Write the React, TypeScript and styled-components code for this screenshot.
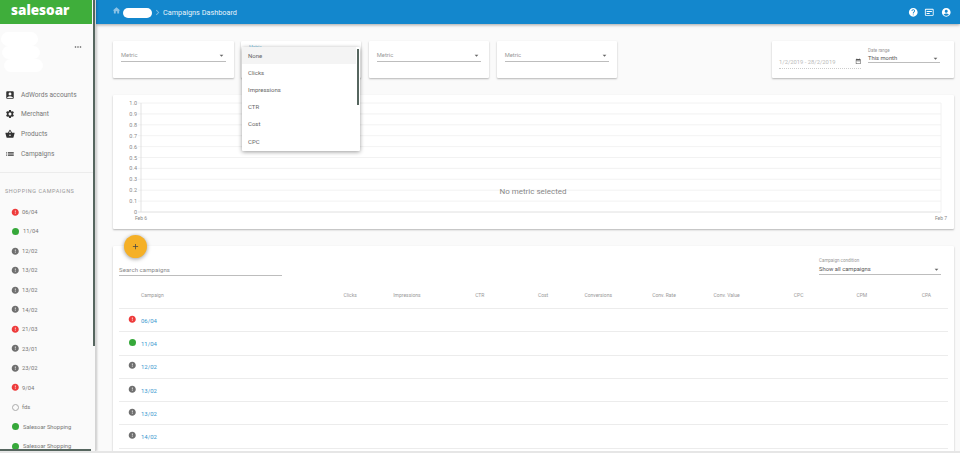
import React from 'react';
import styled, { createGlobalStyle } from 'styled-components';
import {
  MdAccountBox, MdAccountCircle, MdAdd, MdArrowDropDown, MdChevronRight, MdDateRange, MdError,
  MdHelp, MdHome, MdList, MdMoreHoriz, MdSettings, MdShoppingBasket
} from 'react-icons/md';

const Global = createGlobalStyle`
  html, body { margin: 0; padding: 0; height: 100%; overflow: hidden; background: #fafafa; }
  body { font-family: Roboto, "Liberation Sans", sans-serif; color: #777; }
  * { box-sizing: border-box; }
`;

const Shell = styled.div`
  display: flex;
  width: 960px;
  height: 453px;
  overflow: hidden;
  position: relative;
`;

/* sidebar */
const Sidebar = styled.aside`
  width: 96px;
  flex: none;
  height: 451px;
  background: #fafafa;
  border-right: 1px solid #d4d4d4;
  box-shadow: 1px 0 2px rgba(0, 0, 0, 0.2);
  position: relative;
  overflow: hidden;
  z-index: 2;
`;
const SideScroll = styled.div`
  position: absolute;
  top: 0;
  right: 0;
  width: 2.5px;
  height: 346px;
  background: #56665f;
`;
const HorizScroll = styled.div`
  position: absolute;
  left: 0;
  bottom: 0;
  width: 91px;
  height: 2px;
  background: #56665f;
`;
const Logo = styled.div`
  height: 24px;
  background: #3fae3b;
  margin-right: 3px;
  color: #fff;
  font-size: 13.5px;
  font-weight: 800;
  line-height: 20px;
  padding-left: 11px;
  font-family: "Open Sans", Roboto, sans-serif;
`;
const Account = styled.div`
  height: 49px;
  padding: 8px 0 0 1px;
  display: flex;
  position: relative;
`;
const Blobs = styled.div`
  width: 42px;
  display: flex;
  flex-direction: column;
`;
const Blob = styled.div<{ $w: number; $h: number; $ml?: number }>`
  width: ${p => p.$w}px;
  height: ${p => p.$h}px;
  margin-left: ${p => p.$ml || 0}px;
  border-radius: 8px;
  background: #fff;
`;
const Dots = styled.div`
  margin: 10px 0 0 30px;
  color: #555;
  font-size: 10px;
  line-height: 0;
  height: 10px;
`;
const Nav = styled.nav`
  padding-top: 12px;
  height: 100px;
  border-bottom: 1px solid #ececec;
`;
const NavItem = styled.div`
  display: flex;
  align-items: center;
  height: 19.6px;
  padding-left: 5px;
  gap: 6px;
  font-size: 6.6px;
  color: #777;
  svg { font-size: 10px; color: #333; flex: none; }
`;
const SectionTitle = styled.div`
  font-size: 5.5px;
  letter-spacing: 0.55px;
  color: #999;
  padding: 15px 0 0 5px;
  height: 29px;
`;
const CampItem = styled.div`
  display: flex;
  align-items: center;
  height: 19.55px;
  padding-left: 12px;
  gap: 3px;
  font-size: 5.8px;
  color: #777;
  white-space: nowrap;
`;
const statusColor = { red: '#ee3b3b', grey: '#6f6f6f' };
const StatusIcon = styled.span<{ $kind: string }>`
  display: inline-flex;
  align-items: center;
  justify-content: center;
  flex: none;
  width: 7px;
  height: 7px;
  margin-right: ${p => (p.$kind === 'green' ? 1 : 0)}px;
  border-radius: 50%;
  background: ${p => (p.$kind === 'green' ? '#36a83a' : 'transparent')};
  border: ${p => (p.$kind === 'empty' ? '1px solid #aaa' : 'none')};
  color: ${p => statusColor[p.$kind] || '#fff'};
  svg { font-size: 8.5px; flex: none; }
`;

/* main */
const Main = styled.main`
  flex: 1;
  min-width: 0;
  height: 453px;
  display: flex;
  flex-direction: column;
  overflow: hidden;
  position: relative;
`;
const TopBar = styled.header`
  height: 24px;
  flex: none;
  background: #1387cd;
  box-shadow: 0 1px 3px rgba(0, 0, 0, 0.35);
  color: #e8f3fa;
  display: flex;
  align-items: center;
  padding: 0 9px 0 16px;
  font-size: 7.3px;
  position: relative;
  z-index: 1;
`;
const HomeIcon = styled(MdHome)`
  font-size: 9px;
  color: #8cc3e6;
  margin-top: -3px;
`;
const Pill = styled.div`
  width: 29px;
  height: 10px;
  border-radius: 5px;
  background: #fff;
  margin-left: 2px;
  margin-top: 2px;
`;
const Crumb = styled(MdChevronRight)`
  font-size: 11px;
  color: #7db9e0;
`;
const TopIcons = styled.div`
  margin-left: auto;
  display: flex;
  gap: 6px;
  svg { width: 10.5px; height: 10.5px; color: #fff; fill: currentColor; }
`;
const Content = styled.div`
  flex: 1;
  padding: 17px 6px 0 17px;
  display: flex;
  flex-direction: column;
  position: relative;
`;
const FilterRow = styled.div`
  display: flex;
  gap: 7.4px;
  height: 37px;
`;
const Card = styled.div`
  background: #fff;
  box-shadow: 0 1px 2px rgba(0, 0, 0, 0.28);
  border-radius: 1px;
`;
const MetricCard = styled(Card)`
  width: 120.5px;
  padding: 8px 8px 0;
`;
const SelectLine = styled.div<{ $dark?: boolean; $size?: number }>`
  display: flex;
  align-items: center;
  justify-content: space-between;
  height: ${p => p.$size || 13}px;
  border-bottom: 1px solid #bdbdbd;
  font-size: 5.8px;
  color: ${p => (p.$dark ? '#555' : '#999')};
  svg { font-size: 9px; color: #666; flex: none; }
`;
const FocusLabel = styled.div`
  font-size: 4.5px;
  line-height: 5px;
  margin-top: -4px;
  color: #7fc4e0;
`;
const DateCard = styled(Card)`
  width: 182px;
  margin-left: auto;
  padding: 7px 14px 0 7px;
  display: flex;
  gap: 7px;
`;
const DateField = styled.div`
  width: 82px;
  margin-top: 7px;
  height: 14px;
  border-bottom: 1px dotted #ccc;
  display: flex;
  align-items: center;
  justify-content: space-between;
  font-size: 5.8px;
  color: #bbb;
  svg { font-size: 6.5px; color: #555; }
`;
const RangeField = styled.div`
  flex: 1;
`;
const TinyLabel = styled.div`
  font-size: 4.5px;
  line-height: 6px;
  color: #999;
`;
const ChartCard = styled(Card)`
  margin-top: 17px;
  height: 134px;
  flex: none;
`;
const ChartSvg = styled.svg`
  display: block;
  text { font-family: Roboto, "Liberation Sans", sans-serif; fill: #888; }
`;
const TableCard = styled(Card)`
  margin-top: 17px;
  flex: 1;
  padding: 12px 6px 0;
  position: relative;
`;
const Fab = styled.button`
  position: absolute;
  left: 10.5px;
  top: -11.5px;
  width: 23px;
  height: 23px;
  border: none;
  padding: 0;
  border-radius: 50%;
  background: #f5b026;
  box-shadow: 0 1px 4px rgba(0, 0, 0, 0.4);
  display: flex;
  align-items: center;
  justify-content: center;
  color: #444;
  font-size: 9px;
`;
const TableTools = styled.div`
  display: flex;
  justify-content: space-between;
  height: 18px;
`;
const Search = styled.div`
  width: 163px;
  height: 18px;
  padding-top: 8px;
  border-bottom: 1px solid #bdbdbd;
  font-size: 6px;
  letter-spacing: 0.1px;
  color: #888;
`;
const Condition = styled.div`
  width: 122px;
  margin-right: 7px;
`;
const TableRow = styled.div<{ $head?: boolean }>`
  display: grid;
  grid-template-columns: 22px 1fr repeat(10, 63.8px);
  padding-right: 17px;
  align-items: center;
  height: ${p => (p.$head ? 33 : 23.3)}px;
  padding-top: ${p => (p.$head ? 5 : 0)}px;
  border-bottom: 1px solid #ececec;
  font-size: 5px;
  color: #999;
`;
const NumHead = styled.div`
  text-align: right;
`;
const RowStatus = styled.div`
  padding-left: 9.5px;
  display: flex;
  margin-top: -2px;
`;
const CampLink = styled.a`
  color: #3a97cf;
  font-size: 6px;
`;
const Dropdown = styled.div`
  position: absolute;
  left: 146px;
  top: 23px;
  width: 118px;
  height: 104px;
  background: #fff;
  border-radius: 1px;
  box-shadow: 0 1px 4px rgba(0, 0, 0, 0.4);
  z-index: 5;
  overflow: hidden;
`;
const DropItem = styled.div<{ $active?: boolean }>`
  height: 17.1px;
  padding-left: 6px;
  margin-right: 4px;
  display: flex;
  align-items: center;
  font-size: 6px;
  color: #666;
  background: ${p => (p.$active ? '#f4f4f4' : 'transparent')};
`;
const DropScroll = styled.div`
  position: absolute;
  right: 1px;
  top: 2px;
  width: 2.5px;
  height: 56px;
  background: #56665f;
`;
const BottomStrip = styled.div`
  position: absolute;
  left: 0;
  right: 0;
  bottom: 0;
  height: 2px;
  background: #e6e6e6;
  z-index: 3;
`;

const navItems = [
  { label: 'AdWords accounts', Icon: MdAccountBox },
  { label: 'Merchant', Icon: MdSettings },
  { label: 'Products', Icon: MdShoppingBasket },
  { label: 'Campaigns', Icon: MdList }
];
const campaigns = [
  ['06/04', 'red'], ['11/04', 'green'], ['12/02', 'grey'], ['13/02', 'grey'], ['13/02', 'grey'],
  ['14/02', 'grey'], ['21/03', 'red'], ['23/01', 'grey'], ['23/02', 'grey'], ['9/04', 'red'],
  ['fds', 'empty'], ['Salesoar Shopping', 'green'], ['Salesoar Shopping', 'green']
];
const columns = ['Clicks', 'Impressions', 'CTR', 'Cost', 'Conversions', 'Conv. Rate', 'Conv. Value', 'CPC', 'CPM', 'CPA'];
const metrics = ['None', 'Clicks', 'Impressions', 'CTR', 'Cost', 'CPC'];
const ticks = ['1.0', '0.9', '0.8', '0.7', '0.6', '0.5', '0.4', '0.3', '0.2', '0.1', '0'];

const Status = ({ kind }: { kind: string }) => (
  <StatusIcon $kind={kind}>{(kind === 'red' || kind === 'grey') && <MdError />}</StatusIcon>
);

const CardIcon = () => (
  <svg viewBox="0 0 24 24">
    <path d="M20 4H4c-1.1 0-2 .9-2 2v12c0 1.1.9 2 2 2h16c1.1 0 2-.9 2-2V6c0-1.1-.9-2-2-2zm0 14H4V6h16v12z" />
    <path d="M6 9h12v2.5H6zM6 13.5h7V16H6z" />
  </svg>
);

const Chart = () => (
  <ChartSvg width="841" height="134" viewBox="0 0 841 134">
    {ticks.map((t, i) => {
      const y = 8 + i * 10.9;
      return (
        <g key={t}>
          <line x1="25" x2="828" y1={y} y2={y} stroke={i === 10 ? '#d8d8d8' : '#efefef'} strokeWidth="0.8" />
          <text x="24" y={y + 2} fontSize="5.5" textAnchor="end">{t}</text>
        </g>
      );
    })}
    <line x1="28" x2="28" y1="8" y2="117" stroke="#dcdcdc" strokeWidth="0.8" />
    <line x1="828" x2="828" y1="8" y2="117" stroke="#efefef" strokeWidth="0.8" />
    <text x="28" y="125" fontSize="5" textAnchor="middle">Feb 6</text>
    <text x="828" y="125" fontSize="5" textAnchor="middle">Feb 7</text>
    <text x="420" y="99" fontSize="8" textAnchor="middle">No metric selected</text>
  </ChartSvg>
);

export default function App() {
  return (
    <Shell>
      <Global />
      <Sidebar>
        <Logo>salesoar</Logo>
        <Account>
          <Blobs>
            <Blob $w={37} $h={14} />
            <Blob $w={38} $h={13} $ml={1} />
            <Blob $w={39} $h={13} $ml={3} />
          </Blobs>
          <Dots><MdMoreHoriz /></Dots>
        </Account>
        <Nav>
          {navItems.map(({ label, Icon }) => (
            <NavItem key={label}><Icon />{label}</NavItem>
          ))}
        </Nav>
        <SectionTitle>SHOPPING CAMPAIGNS</SectionTitle>
        {campaigns.map(([name, kind], i) => (
          <CampItem key={i}><Status kind={kind} />{name}</CampItem>
        ))}
        <SideScroll />
        <HorizScroll />
      </Sidebar>
      <Main>
        <TopBar>
          <HomeIcon />
          <Pill />
          <Crumb />
          Campaigns Dashboard
          <TopIcons><MdHelp /><CardIcon /><MdAccountCircle /></TopIcons>
        </TopBar>
        <Content>
          <FilterRow>
            {[0, 1, 2, 3].map(i => (
              <MetricCard key={i}>
                {i === 1 ? <FocusLabel>Metric</FocusLabel> : <SelectLine>Metric<MdArrowDropDown /></SelectLine>}
              </MetricCard>
            ))}
            <DateCard>
              <DateField>1/2/2019 - 28/2/2019<MdDateRange /></DateField>
              <RangeField>
                <TinyLabel>Date range</TinyLabel>
                <SelectLine $dark $size={9}>This month<MdArrowDropDown /></SelectLine>
              </RangeField>
            </DateCard>
          </FilterRow>
          <ChartCard><Chart /></ChartCard>
          <TableCard>
            <Fab><MdAdd /></Fab>
            <TableTools>
              <Search>Search campaigns</Search>
              <Condition>
                <TinyLabel>Campaign condition</TinyLabel>
                <SelectLine $dark $size={11}>Show all campaigns<MdArrowDropDown /></SelectLine>
              </Condition>
            </TableTools>
            <TableRow $head>
              <span />
              <span>Campaign</span>
              {columns.map(c => <NumHead key={c}>{c}</NumHead>)}
            </TableRow>
            {campaigns.slice(0, 6).map(([name, kind], i) => (
              <TableRow key={i}>
                <RowStatus><Status kind={kind} /></RowStatus>
                <CampLink>{name}</CampLink>
              </TableRow>
            ))}
          </TableCard>
          <Dropdown>
            {metrics.map((m, i) => <DropItem key={m} $active={i === 0}>{m}</DropItem>)}
            <DropScroll />
          </Dropdown>
        </Content>
      </Main>
      <BottomStrip />
    </Shell>
  );
}
